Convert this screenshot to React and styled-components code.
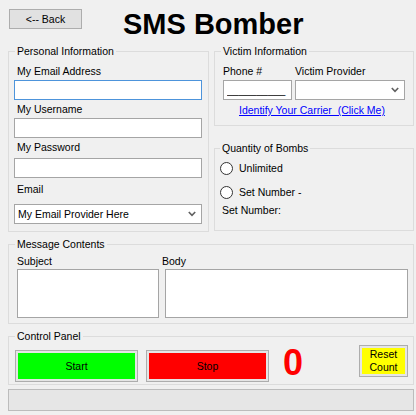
import React from 'react';
import styled, { createGlobalStyle } from 'styled-components';

const GlobalStyle = createGlobalStyle`
  html, body {
    margin: 0;
    padding: 0;
    background: #f0f0f0;
  }
  body {
    font-family: 'Liberation Sans', Arial, sans-serif;
    font-size: 10.5px;
    color: #000;
  }
  * {
    box-sizing: border-box;
  }
`;

const Window = styled.div`
  width: 416px;
  height: 415px;
  padding: 0 2px 0 8px;
  overflow: hidden;
  background: #f0f0f0;
`;

const Header = styled.div`
  display: flex;
  align-items: flex-start;
  height: 45px;
  padding-top: 9px;
`;

const BackButton = styled.button`
  margin-left: 1px;
  width: 73px;
  height: 20px;
  padding: 0;
  border: 1px solid #adadad;
  background: #e1e1e1;
  font-family: inherit;
  font-size: 10.5px;
  color: #000;
`;

const Title = styled.h1`
  margin: 1px 0 0 41px;
  font-size: 29px;
  line-height: 29px;
  font-weight: bold;
  color: #000;
`;

const Row = styled.div`
  display: flex;
  align-items: flex-start;
  gap: 5px;
`;

const Column = styled.div`
  display: flex;
  flex-direction: column;
  width: ${(p) => p.$w}px;
`;

const GroupBox = styled.fieldset`
  margin: ${(p) => p.$mt || 0}px 0 0 0;
  padding: 0;
  min-width: 0;
  width: ${(p) => (p.$w ? `${p.$w}px` : '100%')};
  border: 1px solid #dcdcdc;
`;

const Legend = styled.legend`
  margin-left: ${(p) => (p.$x === undefined ? 6 : p.$x)}px;
  padding: 0 2px;
  font-size: 10.5px;
  line-height: 13px;
`;

const GroupBody = styled.div`
  padding: ${(p) => p.$pad};
`;

const Label = styled.div`
  line-height: 12px;
  white-space: nowrap;
  margin-top: ${(p) => p.$mt || 0}px;
  margin-left: ${(p) => p.$indent || 0}px;
`;

const TextBox = styled.input`
  display: block;
  width: 100%;
  height: 20px;
  margin: ${(p) => p.$mt || 0}px 0 0 0;
  padding: 0 3px;
  border: 1px solid ${(p) => (p.$focused ? '#4d94db' : '#a5a5a5')};
  background: #fff;
  font-family: inherit;
  font-size: 10.5px;
  color: #000;
  outline: none;
`;

const ComboBox = styled.div`
  display: flex;
  align-items: center;
  justify-content: space-between;
  height: 20px;
  margin-top: ${(p) => p.$mt || 0}px;
  padding: 0 5px 0 3px;
  border: 1px solid #a5a5a5;
  background: #fff;
  white-space: nowrap;
`;

const FieldGrid = styled.div`
  display: grid;
  grid-template-columns: ${(p) => p.$cols};
  column-gap: ${(p) => p.$gap}px;
  row-gap: ${(p) => p.$rowGap}px;
`;

const LinkText = styled.a`
  display: block;
  margin: 4px 0 0 16px;
  line-height: 12px;
  color: #0000ff;
  text-decoration: underline;
  white-space: pre;
`;

const RadioRow = styled.label`
  display: flex;
  align-items: center;
  gap: 6px;
  height: 16px;
  margin-top: ${(p) => p.$mt || 0}px;
`;

const RadioCircle = styled.span`
  flex: none;
  width: 13px;
  height: 13px;
  border-radius: 50%;
  border: 1px solid #333;
  background: #fff;
`;

const TextArea = styled.textarea`
  display: block;
  height: 49px;
  margin: 0;
  padding: 2px;
  border: 1px solid #a5a5a5;
  background: #fff;
  resize: none;
  outline: none;
  font-family: inherit;
`;

const ControlRow = styled.div`
  display: flex;
  align-items: flex-start;
  padding: 2px 5px 2px 6px;
`;

const ColorButton = styled.button`
  flex: none;
  width: ${(p) => p.$w}px;
  height: 32px;
  margin: ${(p) => p.$mt || 0}px 0 0 ${(p) => p.$ml || 0}px;
  padding: 2px;
  border: 1px solid #adadad;
  background: #e5e5e5;
  font-family: inherit;
  font-size: 10.5px;
  color: #000;
  ${(p) => p.$push && 'margin-left: auto;'}
`;

const ButtonFill = styled.span`
  display: flex;
  flex-direction: column;
  align-items: center;
  justify-content: center;
  width: 100%;
  height: 100%;
  background: ${(p) => p.$color};
  line-height: 13px;
`;

const Counter = styled.div`
  margin-left: 14px;
  font-size: 36px;
  line-height: 36px;
  font-weight: bold;
  color: #ff0000;
`;

const ProgressBar = styled.div`
  height: 22px;
  margin-top: 4px;
  border: 1px solid #bcbcbc;
  background: #e6e6e6;
`;

function Chevron() {
  return (
    <svg width="8" height="6" viewBox="0 0 8 6">
      <path d="M0.8 1 L4 4.4 L7.2 1" fill="none" stroke="#606060" strokeWidth="1.6" />
    </svg>
  );
}

export default function App() {
  return (
    <Window>
      <GlobalStyle />
      <Header>
        <BackButton>{'<-- Back'}</BackButton>
        <Title>SMS Bomber</Title>
      </Header>

      <Row>
        <GroupBox $w={201}>
          <Legend>Personal Information</Legend>
          <GroupBody $pad="7px 6px 7px 5px">
            <Label $indent={3}>My Email Address</Label>
            <TextBox $mt={3} $focused />
            <Label $indent={3} $mt={3}>My Username</Label>
            <TextBox $mt={3} />
            <Label $indent={3} $mt={3}>My Password</Label>
            <TextBox $mt={5} type="password" />
            <Label $indent={3} $mt={5}>Email</Label>
            <ComboBox $mt={9}>
              <span>My Email Provider Here</span>
              <Chevron />
            </ComboBox>
          </GroupBody>
        </GroupBox>

        <Column $w={200}>
          <GroupBox>
            <Legend>Victim Information</Legend>
            <GroupBody $pad="7px 7px 9px 8px">
              <FieldGrid $cols="69px 110px" $gap={3} $rowGap={3}>
                <Label>Phone #</Label>
                <Label>Victim Provider</Label>
                <TextBox defaultValue="__________" />
                <ComboBox>
                  <span />
                  <Chevron />
                </ComboBox>
              </FieldGrid>
              <LinkText href="#">Identify Your Carrier  (Click Me)</LinkText>
            </GroupBody>
          </GroupBox>

          <GroupBox $mt={16}>
            <Legend $x={5}>Quantity of Bombs</Legend>
            <GroupBody $pad="5px 0 14px 5px">
              <RadioRow>
                <RadioCircle />
                Unlimited
              </RadioRow>
              <RadioRow $mt={8}>
                <RadioCircle />
                Set Number -
              </RadioRow>
              <Label $indent={2} $mt={4}>Set Number:</Label>
            </GroupBody>
          </GroupBox>
        </Column>
      </Row>

      <GroupBox $mt={6}>
        <Legend>Message Contents</Legend>
        <GroupBody $pad="4px 4px 5px 8px">
          <FieldGrid $cols="142px 243px" $gap={6} $rowGap={2}>
            <Label>Subject</Label>
            <Label $indent={-3}>Body</Label>
            <TextArea />
            <TextArea />
          </FieldGrid>
        </GroupBody>
      </GroupBox>

      <GroupBox $mt={6}>
        <Legend>Control Panel</Legend>
        <ControlRow>
          <ColorButton $w={123} $mt={5}>
            <ButtonFill $color="#00ff00">Start</ButtonFill>
          </ColorButton>
          <ColorButton $w={123} $mt={5} $ml={8}>
            <ButtonFill $color="#ff0000">Stop</ButtonFill>
          </ColorButton>
          <Counter>0</Counter>
          <ColorButton $w={49} $push>
            <ButtonFill $color="#ffff00">
              <span>Reset</span>
              <span>Count</span>
            </ButtonFill>
          </ColorButton>
        </ControlRow>
      </GroupBox>

      <ProgressBar />
    </Window>
  );
}
